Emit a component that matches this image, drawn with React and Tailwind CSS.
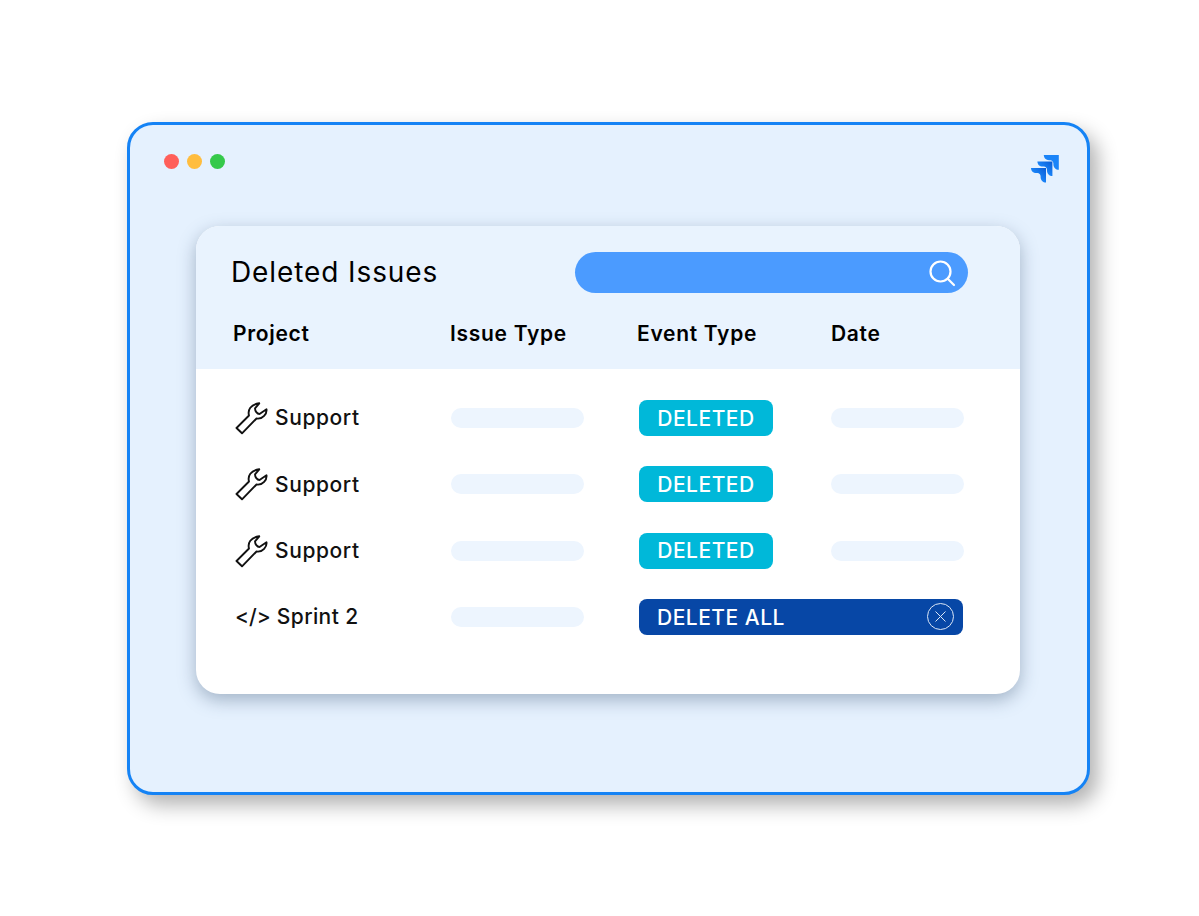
import React from 'react';

const rows = [
  { name: 'Support' },
  { name: 'Support' },
  { name: 'Support' },
];

const font = "font-['Inter',sans-serif]";
const piece = 'M0 0 H15 V14.7 C12 14.7 9.6 12.4 9.6 9.4 V8.4 C9.6 6.6 8.2 5.2 6.4 5.2 H5.2 C2.3 5.2 0 2.9 0 0 Z';

const WrenchIcon = () => (
  <svg width="34" height="34" viewBox="0 0 34 34" fill="none" stroke="#111" strokeWidth="1.9" strokeLinejoin="round" className="shrink-0">
    <path d="M1.5 27 L14 14.5 C12.5 9 15.5 3.5 24.3 2.3 L20 7.3 C20 10 22 13 24.5 13 L31.5 8.3 C32 12.5 28 18.5 21.5 17.5 L7 32.3 Z" />
  </svg>
);

const JiraLogo = () => (
  <svg width="28" height="28" viewBox="0 0 28 28">
    <defs>
      <linearGradient id="jira-fade" x1="1" y1="0" x2="0.45" y2="0.55">
        <stop offset="0" stopColor="#0a5bd3" />
        <stop offset="1" stopColor="#1a84f8" />
      </linearGradient>
    </defs>
    <path d={piece} fill="#1a84f8" transform="translate(12.8 0)" />
    <path d={piece} fill="url(#jira-fade)" transform="translate(6.4 6.4)" />
    <path d={piece} fill="url(#jira-fade)" transform="translate(0 12.9)" />
  </svg>
);

const Bar = () => <div className="h-5 w-[133px] rounded-[10px] bg-[#edf5fe]" />;

const DeletedBadge = () => (
  <div className="flex h-9 w-[134px] items-center justify-center rounded-lg bg-[#00b8d9] pt-px text-[21px] font-medium tracking-[0.5px] text-white">
    DELETED
  </div>
);

export default function App() {
  return (
    <div className={`${font} h-[916px] w-[1199px] overflow-hidden bg-white pl-[127px] pt-[122px]`}>
      <div className="h-[673px] w-[963px] rounded-[26px] border-[3px] border-[#1583f5] bg-[#e5f1fe] px-[66px] pt-[28px] shadow-[8px_10px_20px_rgba(0,0,0,0.3)]">
        <div className="relative -ml-[32px] flex h-[73px] items-start gap-[8.5px] pt-[1px]">
          <span className="h-[14.5px] w-[14.5px] rounded-full bg-[#ff5f5a]" />
          <span className="h-[14.5px] w-[14.5px] rounded-full bg-[#ffbd3e]" />
          <span className="h-[14.5px] w-[14.5px] rounded-full bg-[#35c94a]" />
          <div className="absolute left-[867px] top-[2px]">
            <JiraLogo />
          </div>
        </div>

        <div className="h-[468px] w-[824px] overflow-hidden rounded-[24px] bg-white shadow-[0_6px_18px_rgba(60,85,115,0.4)]">
          <div className="h-[143px] bg-[#e9f3fe] pl-[35px] pt-[26px]">
            <div className="flex items-center justify-between pr-[52px]">
              <h1 className="-mt-[2px] text-[28px] font-normal tracking-[0.9px] text-black">Deleted Issues</h1>
              <div className="flex h-[41px] w-[393px] items-center justify-end rounded-full bg-[#4b9bff] pr-[12px]">
                <svg width="28" height="28" viewBox="0 0 28 28" fill="none" stroke="#fff" strokeWidth="2.2" strokeLinecap="round">
                  <circle cx="12.5" cy="12.5" r="10" />
                  <path d="M20 20 L26 26" />
                </svg>
              </div>
            </div>
            <div className="mt-[25px] grid grid-cols-[217px_187px_194px_auto] pl-[2px] text-[21px] font-semibold tracking-[0.7px] text-black">
              <span>Project</span>
              <span>Issue Type</span>
              <span>Event Type</span>
              <span>Date</span>
            </div>
          </div>

          <div className="flex flex-col gap-[30.3px] pl-[39px] pt-[31px] text-[21px] font-medium tracking-[0.6px] text-[#111]">
            {rows.map((row, i) => (
              <div key={i} className="grid h-9 grid-cols-[216px_188px_192px_auto] items-center">
                <div className="flex items-center gap-[6px]">
                  <WrenchIcon />
                  <span>{row.name}</span>
                </div>
                <Bar />
                <DeletedBadge />
                <Bar />
              </div>
            ))}
            <div className="grid h-9 grid-cols-[216px_188px_auto] items-center">
              <div className="flex items-center gap-[6px]">
                <span className="tracking-normal">&lt;/&gt;</span>
                <span className="tracking-[0.4px]">Sprint 2</span>
              </div>
              <Bar />
              <div className="flex h-9 w-[324px] items-center justify-between rounded-lg bg-[#0747a6] pl-[18px] pr-[9px] text-[21px] font-medium tracking-[0.5px] text-white">
                <span className="pt-px">DELETE ALL</span>
                <svg width="27" height="27" viewBox="0 0 27 27" fill="none" stroke="#dbe6f6" strokeWidth="1">
                  <circle cx="13.5" cy="13.5" r="13" />
                  <path d="M8.5 8.5 L18.5 18.5 M18.5 8.5 L8.5 18.5" />
                </svg>
              </div>
            </div>
          </div>
        </div>
      </div>
    </div>
  );
}
